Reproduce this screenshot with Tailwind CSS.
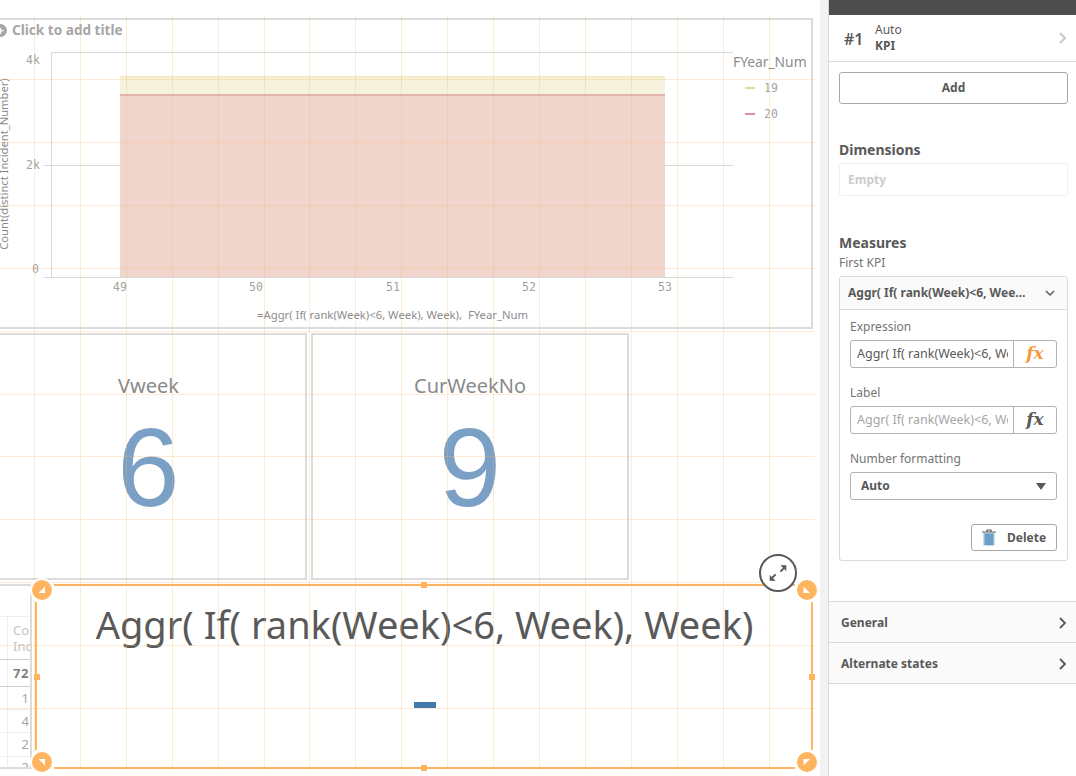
<!DOCTYPE html>
<html>
<head>
<meta charset="utf-8">
<script src="https://cdn.jsdelivr.net/npm/@tailwindcss/browser@4"></script>
</head>
<body class="bg-white overflow-hidden">
<div class="flex w-[1076px] h-[776px] overflow-hidden font-['Noto_Sans','Open_Sans',sans-serif]">
  <!-- sheet canvas -->
  <main class="relative w-[820px] h-[776px] overflow-hidden bg-white shrink-0">
    <!-- chart -->
    <section class="absolute left-[-10px] top-[18px] w-[823px] h-[311px] border-[2px] border-[#dcdcdc] text-[#8c8c8c]">
      <div class="absolute left-[2px] top-[4px] w-[13px] h-[13px] rounded-full bg-[#a6a6a6] flex items-center justify-center text-white text-[12px] leading-none font-bold">+</div>
      <h2 class="absolute left-[20px] top-[1px] text-[13.6px] leading-[18px] font-bold text-[#a6a6a6]">Click to add title</h2>
      <div class="absolute left-[59px] top-[32px] w-[682px] h-[225px] border-l border-t border-[#d9d9d9]"></div>
      <div class="absolute left-[52px] top-[145px] w-[689px] h-px bg-[#d9d9d9]"></div>
      <div class="absolute left-[52px] top-[257px] w-[689px] h-px bg-[#d9d9d9]"></div>
      <div class="absolute left-[128px] top-[56px] w-[545px] h-[18px] bg-[#f5f2dd] border-t-2 border-[#f2ebc5]"></div>
      <div class="absolute left-[128px] top-[74px] w-[545px] h-[183px] bg-[#efd5cc] border-t-2 border-[#e3b3ae]"></div>
      <div class="font-['DejaVu_Sans_Mono','Liberation_Mono',monospace] text-[11.5px] leading-[14px] text-[#a3a3a3]">
        <span class="absolute left-[34px] top-[33px]">4k</span>
        <span class="absolute left-[34px] top-[138px]">2k</span>
        <span class="absolute left-[40px] top-[242px]">0</span>
        <span class="absolute left-[121px] top-[260px]">49</span>
        <span class="absolute left-[257px] top-[260px]">50</span>
        <span class="absolute left-[394px] top-[260px]">51</span>
        <span class="absolute left-[530px] top-[260px]">52</span>
        <span class="absolute left-[666px] top-[260px]">53</span>
        <span class="absolute left-[772px] top-[61px]">19</span>
        <span class="absolute left-[772px] top-[87px]">20</span>
      </div>
      <span class="absolute left-[-78px] top-[137px] w-[180px] text-center -rotate-90 text-[11.2px] leading-[14px] whitespace-nowrap">Count(distinct Incident_Number)</span>
      <span class="absolute left-[265px] top-[288px] text-[11.3px] leading-[14px] whitespace-nowrap">=Aggr( If( rank(Week)&lt;6, Week), Week),&nbsp; FYear_Num</span>
      <span class="absolute left-[741px] top-[33px] text-[13.8px] leading-[18px] whitespace-nowrap">FYear_Num</span>
      <i class="absolute left-[753px] top-[67px] w-[10px] h-[2px] bg-[#e5d69a]"></i>
      <i class="absolute left-[753px] top-[93px] w-[10px] h-[2px] bg-[#dc8f9f]"></i>
    </section>
    <!-- KPI cards -->
    <section class="absolute left-[-10px] top-[333px] w-[317px] h-[247px] border-[2px] border-[#dcdcdc] flex flex-col items-center">
      <h3 class="mt-[38px] text-[20px] leading-[26px] text-[#8a8a8a] font-normal">Vweek</h3>
      <div class="mt-[4px] text-[112px] leading-[130px] text-[#7ba0c5] font-['Liberation_Sans',sans-serif]">6</div>
    </section>
    <section class="absolute left-[311px] top-[333px] w-[318px] h-[247px] border-[2px] border-[#dcdcdc] flex flex-col items-center">
      <h3 class="mt-[38px] text-[20px] leading-[26px] text-[#8a8a8a] font-normal">CurWeekNo</h3>
      <div class="mt-[4px] text-[112px] leading-[130px] text-[#7ba0c5] font-['Liberation_Sans',sans-serif]">9</div>
    </section>
    <!-- table behind -->
    <section class="absolute left-[-10px] top-[584px] w-[42px] h-[185px] border-[2px] border-[#dcdcdc] overflow-hidden text-[#a6a6a6] text-[13px]">
      <div class="absolute left-0 top-[30px] w-full h-px bg-[#eeeeee]"></div>
      <div class="absolute left-[15px] top-[30px] w-px h-[150px] bg-[#eeeeee]"></div>
      <div class="absolute left-[21px] top-[36px] leading-[16px] text-[#c4c4c4]">Co<br>Ind</div>
      <div class="absolute left-0 top-[73px] w-full h-px bg-[#cfcfcf]"></div>
      <div class="absolute left-[21px] top-[79px] font-bold text-[#808080] leading-[16px] tracking-wider">72</div>
      <div class="absolute left-0 top-[100px] w-full h-px bg-[#cfcfcf]"></div>
      <div class="absolute right-[1px] top-[104px] leading-[16px]">1</div>
      <div class="absolute left-0 top-[123px] w-full h-px bg-[#eeeeee]"></div>
      <div class="absolute right-[1px] top-[127px] leading-[16px]">4</div>
      <div class="absolute left-0 top-[146px] w-full h-px bg-[#eeeeee]"></div>
      <div class="absolute right-[1px] top-[150px] leading-[16px]">2</div>
      <div class="absolute left-0 top-[170px] w-full h-px bg-[#eeeeee]"></div>
      <div class="absolute right-[1px] top-[173px] leading-[16px]">3</div>
    </section>
    <!-- selected KPI -->
    <section class="absolute left-[36px] top-[585px] w-[777px] h-[184px] bg-white flex flex-col items-center">
      <h2 class="mt-[13px] text-[38px] leading-[52px] text-[#595959] font-normal whitespace-nowrap">Aggr( If( rank(Week)&lt;6, Week), Week)</h2>
      <div class="mt-[52px] w-[22px] h-[6px] bg-[#4477aa]"></div>
    </section>
    <!-- sheet grid + selection -->
    <svg class="absolute left-0 top-0 pointer-events-none" width="820" height="776" viewBox="0 0 820 776" fill="none">
      <g stroke="#ffb55f" stroke-opacity=".27">
        <path d="M34.5 16V770M80.5 16V770M126.5 16V770M172.5 16V770M218.5 16V770M264.5 16V770M309.5 16V770M355.5 16V770M401.5 16V770M447.5 16V770M493.5 16V770M539.5 16V770M585.5 16V770M631.5 16V770M677.5 16V770M723.5 16V770M769.5 16V770"/>
        <path d="M0 79.5H815M0 142.5H815M0 205.5H815M0 268.5H815M0 331.5H815M0 394.5H815M0 456.5H815M0 519.5H815M0 582.5H815M0 645.5H815M0 708.5H815"/>
      </g>
      <g stroke="#ffb55f" stroke-width="2">
        <path d="M54 585H795M54 768H795M36 602V750M812 602V750"/>
      </g>
      <g fill="#ffb55f">
        <rect x="34" y="674" width="6" height="6"/><rect x="809" y="674" width="6" height="6"/>
        <rect x="421" y="582" width="6" height="6"/><rect x="421" y="765" width="6" height="6"/>
      </g>
      <g fill="#ffb55f" stroke="#fff" stroke-width="2">
        <circle cx="42" cy="590" r="11"/><circle cx="42" cy="762" r="11"/><circle cx="807" cy="590" r="11"/><circle cx="807" cy="762" r="11"/>
      </g>
      <g fill="#fff">
        <path d="M45 586.500V593H38.500Z"/><path d="M38.500 759H45V765.500Z"/><path d="M803.500 586.500V593H810Z"/><path d="M803.500 765.500V759H810Z"/>
      </g>
      <circle cx="778" cy="573" r="18" fill="#fff" stroke="#595959" stroke-width="2"/>
      <g fill="#595959" stroke="#595959">
        <path d="M786 565.500V570.500L784.300 568.800L781 572L780 571L783.200 567.800L781 565.500Z" stroke-width=".6"/>
        <path d="M770 580.500V575.500L771.700 577.200L775 574L776 575L772.800 578.200L775 580.500Z" stroke-width=".6"/>
      </g>
    </svg>
  </main>

  <!-- properties panel -->
  <div class="w-[9px] shrink-0 bg-[#f2f2f2] border-r border-[#d9d9d9]"></div>
  <aside class="w-[247px] shrink-0 flex flex-col text-[#595959] text-[12px] bg-white">
    <div class="h-[15px] bg-[#4d4d4d]"></div>
    <div class="h-[47px] flex items-center border-b border-[#d9d9d9] pl-[15px] pr-[9px]">
      <span class="text-[16px] font-semibold w-[31px] mt-[1px]">#1</span>
      <div class="flex-1 leading-[16px]">
        <div>Auto</div>
        <div class="font-bold">KPI</div>
      </div>
      <svg width="8" height="12" viewBox="0 0 8 12" fill="none" stroke="#c9c9c9" stroke-width="2"><path d="M1 1l5 5-5 5"/></svg>
    </div>
    <div class="pl-[10px] pr-[8px] flex flex-col">
      <button class="mt-[10px] h-[32px] border border-[#a6a6a6] rounded-[3px] font-bold text-[12px] text-[#595959]">Add</button>
      <h3 class="mt-[36px] text-[14px] leading-[20px] font-bold">Dimensions</h3>
      <div class="mt-[3px] h-[33px] border border-[#f0f0f0] rounded-[3px] pl-[8px] flex items-center font-bold text-[#cccccc]">Empty</div>
      <h3 class="mt-[37px] text-[14px] leading-[20px] font-bold">Measures</h3>
      <div class="leading-[17px] text-[#737373] mt-[1px]">First KPI</div>
      <div class="mt-[5px] h-[285px] border border-[#d9d9d9] rounded-[3px] flex flex-col">
        <div class="h-[33px] shrink-0 bg-[#fafafa] border-b border-[#d9d9d9] pl-[8px] pr-[12px] flex items-center justify-between">
          <span class="font-bold whitespace-nowrap">Aggr( If( rank(Week)&lt;6, Wee…</span>
          <svg width="10" height="7" viewBox="0 0 10 7" fill="none" stroke="#595959" stroke-width="1.500"><path d="M1 1l4 4 4-4"/></svg>
        </div>
        <div class="px-[10px] flex flex-col">
          <label class="mt-[8px] leading-[17px] text-[#737373]">Expression</label>
          <div class="mt-[5px] h-[28px] border border-[#b3b3b3] rounded-[3px] flex items-center">
            <span class="w-[162px] pl-[6px] pr-[5px]"><span class="block overflow-hidden whitespace-nowrap text-[12.500px] text-[#595959]">Aggr( If( rank(Week)&lt;6, Week), Week)</span></span>
            <span class="w-[43px] h-full border-l border-[#b3b3b3] flex items-center justify-center font-['DejaVu_Serif',serif] italic font-bold text-[17px] text-[#f7993d]">fx</span>
          </div>
          <label class="mt-[16px] leading-[17px] text-[#737373]">Label</label>
          <div class="mt-[5px] h-[28px] border border-[#b3b3b3] rounded-[3px] flex items-center">
            <span class="w-[162px] pl-[6px] pr-[5px]"><span class="block overflow-hidden whitespace-nowrap text-[12.500px] text-[#a6a6a6]">Aggr( If( rank(Week)&lt;6, Week), Week)</span></span>
            <span class="w-[43px] h-full border-l border-[#b3b3b3] flex items-center justify-center font-['DejaVu_Serif',serif] italic font-bold text-[17px] text-[#595959]">fx</span>
          </div>
          <label class="mt-[16px] leading-[17px] text-[#737373]">Number formatting</label>
          <div class="mt-[5px] h-[28px] border border-[#b3b3b3] rounded-[3px] flex items-center justify-between pl-[10px] pr-[10px]">
            <span class="font-bold">Auto</span>
            <svg width="10" height="7" viewBox="0 0 10 7" fill="#595959"><path d="M0 0h10L5 7z"/></svg>
          </div>
          <button class="self-end mt-[24px] w-[86px] h-[27px] border border-[#a6a6a6] rounded-[3px] flex items-center pl-[10px] font-bold text-[#595959]">
            <svg class="mr-[11px]" width="14" height="17" viewBox="0 0 14 17" fill="none"><path d="M0 3h14M5 3V1h4v2" stroke="#595959" stroke-width="1.200"/><rect x="1.500" y="4" width="11" height="12.500" fill="#8fbde0"/><path d="M4 5v11M6 5v11M8 5v11M10 5v11" stroke="#4a7ea8"/></svg>
            Delete
          </button>
        </div>
      </div>
    </div>
    <div class="mt-[40px] border-t border-[#d9d9d9]">
      <div class="h-[41px] bg-[#fafafa] border-b border-[#d9d9d9] pl-[12px] pr-[9px] pt-[1px] flex items-center justify-between font-bold"><span>General</span><svg width="8" height="12" viewBox="0 0 8 12" fill="none" stroke="#595959" stroke-width="1.800"><path d="M1 1l5 5-5 5"/></svg></div>
      <div class="h-[41px] bg-[#fafafa] border-b border-[#d9d9d9] pl-[12px] pr-[9px] pt-[1px] flex items-center justify-between font-bold"><span>Alternate states</span><svg width="8" height="12" viewBox="0 0 8 12" fill="none" stroke="#595959" stroke-width="1.800"><path d="M1 1l5 5-5 5"/></svg></div>
    </div>
  </aside>
</div>
</body>
</html>
